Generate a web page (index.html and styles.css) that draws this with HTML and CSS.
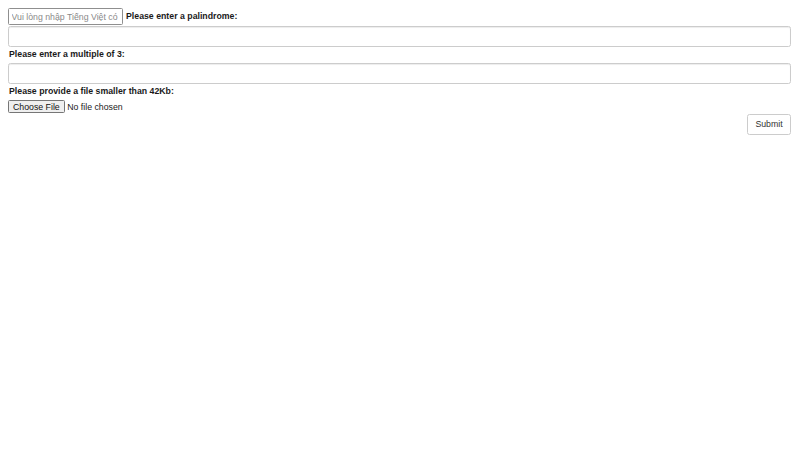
FILE: index.html
```html
<!DOCTYPE html>
<html lang="en">
<head>
<meta charset="utf-8">
<title>Form</title>
<link rel="stylesheet" href="styles.css">
</head>
<body>
<form class="form">
  <div class="first-row">
    <input class="plain-input" type="text" placeholder="Vui lòng nhập Tiếng Việt có dấu">
    <label class="label">Please enter a palindrome:</label>
  </div>
  <input class="control" type="text">
  <label class="label block">Please enter a multiple of 3:</label>
  <input class="control" type="text">
  <label class="label block">Please provide a file smaller than 42Kb:</label>
  <input class="file" type="file">
  <div class="actions">
    <button class="btn" type="submit">Submit</button>
  </div>
</form>
</body>
</html>
```
FILE: styles.css
```css
html, body {
  margin: 0;
  padding: 0;
  background: #fff;
}
body {
  padding: 8px 9px 8px 8px;
  font-family: "Liberation Sans", Arial, sans-serif;
  font-size: 8.75px;
  line-height: 12.5px;
  color: #1a1a1a;
}
.form {
  display: flex;
  flex-direction: column;
}
.first-row {
  display: flex;
  align-items: flex-start;
  gap: 3px;
  height: 18px;
}
.plain-input {
  box-sizing: border-box;
  width: 115px;
  height: 17px;
  margin: 0;
  padding: 0 3px 0 2.5px;
  border: 1px solid #8f8f8f;
  border-radius: 1.5px;
  font-family: inherit;
  font-size: 8.75px;
  color: #333;
  background: #fff;
}
.plain-input::placeholder {
  color: #8a8a8a;
}
.first-row .label {
  line-height: 17px;
}
.label {
  font-weight: bold;
  color: #1a1a1a;
}
.label.block {
  display: block;
  margin: 1px 0 2.5px 1px;
  height: 12.5px;
}
.control {
  display: block;
  box-sizing: border-box;
  width: 100%;
  height: 21px;
  margin: 0;
  padding: 4px 7.5px;
  border: 1px solid #ccc;
  border-radius: 2.5px;
  box-shadow: inset 0 1px 1px rgba(0,0,0,0.075);
  background: #fff;
  font-family: inherit;
  font-size: 8.75px;
}
.file {
  display: block;
  height: 13px;
  margin: 0;
  padding: 0;
  font-family: inherit;
  font-size: 8.75px;
  line-height: 11px;
  color: #1a1a1a;
}
.file::file-selector-button {
  box-sizing: border-box;
  height: 13px;
  margin: 0 2.5px 0 0;
  padding: 0 4px;
  border: 1px solid #767676;
  border-radius: 1.5px;
  background: #efefef;
  font-family: inherit;
  font-size: 8.75px;
  color: #111;
}
.actions {
  display: flex;
  justify-content: flex-end;
  margin-top: 1px;
}
.btn {
  box-sizing: border-box;
  height: 21px;
  width: 44px;
  padding: 0;
  border: 1px solid #ccc;
  border-radius: 2.5px;
  background: #fff;
  color: #333;
  font-family: inherit;
  font-size: 8.75px;
  line-height: 19px;
}
```
